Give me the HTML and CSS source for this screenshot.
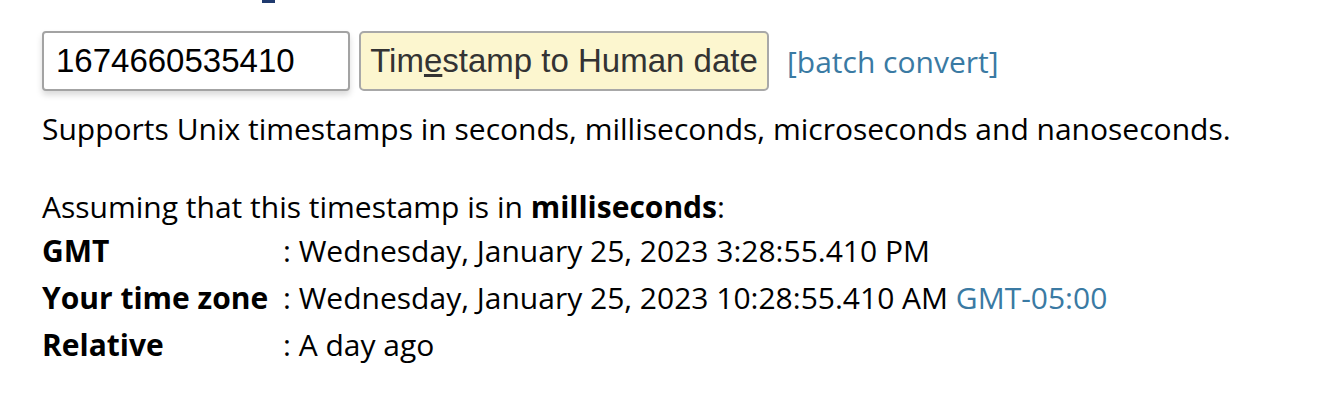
FILE: index.html
```html
<!DOCTYPE html>
<html>
<head>
<meta charset="utf-8">
<link rel="stylesheet" href="styles.css">
</head>
<body>
<div class="page">
  <div class="topmark"></div>
  <form class="convert-row">
    <input class="ts-input" type="text" value="1674660535410">
    <button class="ts-button" type="button">Tim<u>e</u>stamp to Human date</button>
    <a class="batch-link" href="#">[batch convert]</a>
  </form>
  <p class="note">Supports Unix timestamps in seconds, milliseconds, microseconds and nanoseconds.</p>
  <div class="result">
    <p class="assume">Assuming that this timestamp is in <b>milliseconds</b>:</p>
    <table class="result-table">
      <tr><th>GMT</th><td>: Wednesday, January 25, 2023 3:28:55.410 PM</td></tr>
      <tr><th>Your time zone</th><td>: Wednesday, January 25, 2023 10:28:55.410 AM <a class="tz-link" href="#">GMT-05:00</a></td></tr>
      <tr><th>Relative</th><td>: A day ago</td></tr>
    </table>
  </div>
</div>
</body>
</html>
```

FILE: styles.css
```css
html, body {
  margin: 0;
  padding: 0;
  background: #ffffff;
}
body {
  font-family: "Open Sans", "Noto Sans", sans-serif;
  font-size: 30px;
  color: #000;
}
.page {
  position: relative;
  padding: 31px 0 0 42px;
}
.topmark {
  position: absolute;
  left: 262px;
  top: 0;
  width: 13px;
  height: 3px;
  background: #1f3a6e;
}
.convert-row {
  display: flex;
  align-items: center;
  margin: 0;
}
.ts-input {
  box-sizing: border-box;
  width: 308px;
  height: 60px;
  margin: 0;
  padding: 0 12px;
  border: 2px solid #a3a3a3;
  border-radius: 4px;
  box-shadow: 0 4px 6px rgba(0,0,0,0.15);
  font-family: "Liberation Sans", Arial, sans-serif;
  font-size: 33px;
  color: #000;
  background: #fff;
}
.ts-input:focus { outline: none; }
.ts-button {
  box-sizing: border-box;
  height: 60px;
  width: 410px;
  margin: 0 0 0 9px;
  padding: 0;
  border: 2px solid #a8a8a8;
  border-radius: 5px;
  background: #fcf6cf;
  font-family: "Liberation Sans", Arial, sans-serif;
  font-size: 33px;
  color: #333;
}
.batch-link {
  margin-left: 18px;
  color: #3a7aa3;
  text-decoration: none;
  font-size: 30px;
}
.note {
  margin: 17px 0 0 0;
  line-height: 41px;
}
.result {
  margin-top: 37px;
}
.assume {
  margin: 0;
  line-height: 41px;
}
.result-table {
  border-collapse: collapse;
}
.result-table th {
  text-align: left;
  font-weight: 700;
  padding: 0;
  width: 241px;
  height: 47px;
  line-height: 47px;
  white-space: nowrap;
}
.result-table td {
  padding: 0;
  line-height: 47px;
  white-space: nowrap;
}
.tz-link {
  color: #3a7aa3;
  text-decoration: none;
}
```
